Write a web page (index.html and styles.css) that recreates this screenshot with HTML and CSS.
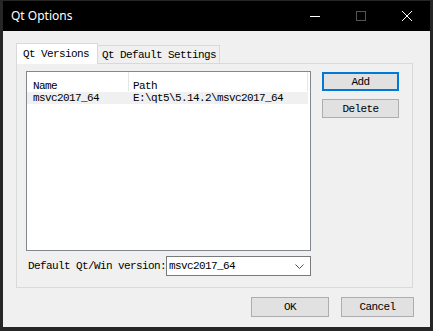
FILE: index.html
```html
<!DOCTYPE html>
<html lang="en">
<head>
  <meta charset="UTF-8">
  <title>Qt Options</title>
  <link rel="stylesheet" href="styles.css">
</head>
<body>
  <div class="window">
    <div class="titlebar">
      <span class="title">Qt Options</span>
      <div class="caption-buttons">
        <span class="caption-btn">
          <svg width="10" height="10" viewBox="0 0 10 10"><path d="M0 5.5h10" stroke="#fff" stroke-width="1"/></svg>
        </span>
        <span class="caption-btn">
          <svg width="10" height="10" viewBox="0 0 10 10"><rect x="0.5" y="0.5" width="9" height="9" fill="none" stroke="#555" stroke-width="1"/></svg>
        </span>
        <span class="caption-btn">
          <svg width="10" height="10" viewBox="0 0 10 10"><path d="M0 0L10 10M10 0L0 10" stroke="#fff" stroke-width="1"/></svg>
        </span>
      </div>
    </div>

    <div class="client">
      <div class="tab-widget">
        <div class="tab-bar">
          <span class="tab active">Qt Versions</span>
          <span class="tab">Qt Default Settings</span>
        </div>
        <div class="pane">
          <div class="top-row">
            <div class="tree">
              <div class="tree-header">
                <span class="col-name">Name</span>
                <span class="col-path">Path</span>
                <span class="col-rest"></span>
              </div>
              <div class="tree-row">
                <span class="col-name">msvc2017_64</span>
                <span class="col-path">E:\qt5\5.14.2\msvc2017_64</span>
              </div>
            </div>
            <div class="side-buttons">
              <button class="btn default">Add</button>
              <button class="btn">Delete</button>
            </div>
          </div>
          <div class="version-row">
            <span class="version-label">Default Qt/Win version:</span>
            <div class="combo">
              <span>msvc2017_64</span>
              <svg width="9" height="5" viewBox="0 0 9 5"><path d="M0.5 0.5L4.5 4.5L8.5 0.5" fill="none" stroke="#555" stroke-width="1"/></svg>
            </div>
          </div>
        </div>
      </div>

      <div class="dialog-buttons">
        <button class="btn ok">OK</button>
        <button class="btn cancel">Cancel</button>
      </div>
    </div>
  </div>
</body>
</html>
```

FILE: styles.css
```css
html, body {
  margin: 0;
  padding: 0;
  background: #262626;
}
.window {
  width: 427px;
  height: 326px;
  padding: 1px 3px 4px 3px;
  background: #262626;
  display: flex;
  flex-direction: column;
}
.titlebar {
  height: 30px;
  background: #000;
  display: flex;
  align-items: center;
  justify-content: space-between;
}
.title {
  padding-left: 8px;
  color: #fff;
  font-family: "Noto Sans", sans-serif;
  font-size: 12px;
  line-height: 30px;
  margin-top: -1px;
}
.caption-buttons {
  display: flex;
  height: 30px;
}
.caption-btn {
  width: 46px;
  height: 30px;
  display: flex;
  align-items: center;
  justify-content: center;
}
.client {
  flex: 1;
  background: #f0f0f0;
  padding: 12px 16px 0 13px;
  font-family: "Liberation Mono", monospace;
  font-size: 11px;
  letter-spacing: -0.6px;
  color: #000;
  white-space: nowrap;
}
.tab-widget {
  width: 397px;
  margin-right: 1px;
}
.tab-bar {
  height: 20px;
  display: flex;
  align-items: flex-end;
}
.tab {
  height: 18px;
  box-sizing: border-box;
  border: 1px solid #d9d9d9;
  border-bottom: none;
  background: #f0f0f0;
  line-height: 19px;
  padding-left: 4px;
  width: 123px;
  margin-left: -1px;
}
.tab.active {
  position: relative;
  z-index: 1;
  height: 21px;
  width: 82px;
  margin-left: 0;
  margin-bottom: -1px;
  background: #fff;
  padding-left: 6px;
  line-height: 20px;
}
.pane {
  height: 225px;
  box-sizing: border-box;
  border: 1px solid #d9d9d9;
  background: #f0f0f0;
  padding: 7px 13px 11px 9px;
  display: flex;
  flex-direction: column;
}
.top-row {
  display: flex;
  gap: 11px;
  height: 180px;
}
.tree {
  width: 285px;
  height: 180px;
  box-sizing: border-box;
  border: 1px solid #828790;
  background: #fff;
  padding-right: 2px;
}
.tree-header {
  height: 20px;
  display: flex;
  line-height: 28px;
}
.tree-header span {
  height: 19px;
  overflow: hidden;
}
.tree-header .col-name {
  border-right: 1px solid #e5e5e5;
}
.tree-header .col-rest {
  flex: 1;
  border-right: 1px solid #e5e5e5;
}
.col-name {
  box-sizing: border-box;
  width: 102px;
  padding-left: 6px;
  flex-shrink: 0;
}
.col-path {
  box-sizing: border-box;
  width: 175px;
  padding-left: 4px;
  flex-shrink: 0;
}
.tree-row {
  height: 12px;
  display: flex;
  background: #f0f0f0;
  line-height: 12px;
}
.side-buttons {
  display: flex;
  flex-direction: column;
  gap: 8px;
  padding-top: 1px;
}
.btn {
  font-family: "Liberation Mono", monospace;
  font-size: 11px;
  letter-spacing: -0.6px;
  color: #000;
  background: #e1e1e1;
  border: 1px solid #adadad;
  width: 77px;
  height: 19px;
  padding: 0;
  margin: 0;
}
.btn.default {
  border: 2px solid #0078d7;
}
.version-row {
  margin-top: 5px;
  height: 20px;
  display: flex;
  align-items: center;
}
.version-label {
  padding-left: 2px;
  width: 138px;
  flex-shrink: 0;
}
.combo {
  width: 145px;
  height: 20px;
  flex-shrink: 0;
  box-sizing: border-box;
  border: 1px solid #7a7a7a;
  background: #fff;
  display: flex;
  align-items: center;
  justify-content: space-between;
  padding: 0 6px 0 2px;
}
.dialog-buttons {
  margin-top: 9px;
  display: flex;
  justify-content: flex-end;
  gap: 12px;
}
.btn.ok {
  width: 78px;
  height: 20px;
}
.btn.cancel {
  width: 73px;
  height: 20px;
}
```
